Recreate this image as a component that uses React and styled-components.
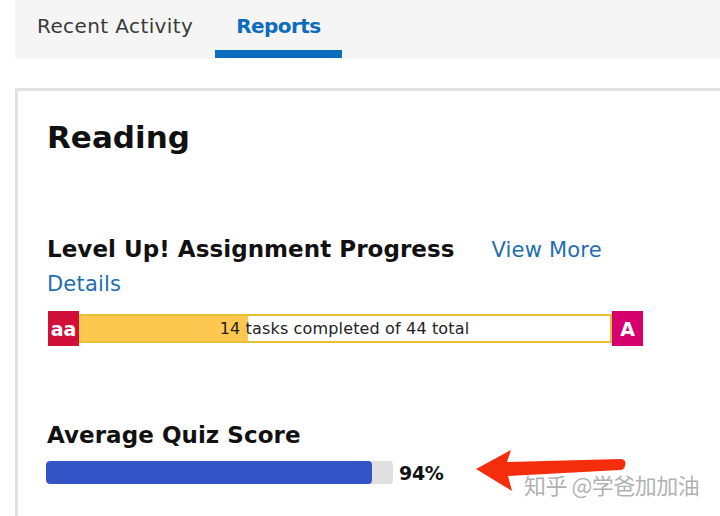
import React from "react";
import styled, { createGlobalStyle } from "styled-components";

const GlobalStyle = createGlobalStyle`
  html, body {
    margin: 0;
    padding: 0;
    background: #fff;
    overflow: hidden;
  }
  body {
    font-family: "DejaVu Sans", "Open Sans", sans-serif;
    color: #111;
  }
`;

const Page = styled.div`
  position: relative;
  width: 720px;
  height: 516px;
  padding-left: 15px;
  box-sizing: border-box;
  overflow: hidden;
`;

const TabBar = styled.div`
  display: flex;
  height: 59px;
  background: #f5f5f5;
`;

const Tab = styled.div`
  position: relative;
  padding: 12px 22px 0 ${(p) => (p.active ? "21px" : "22px")};
  height: 100%;
  box-sizing: border-box;
  font-size: 20px;
  line-height: 28px;
  letter-spacing: ${(p) => (p.active ? "-0.6px" : "0.4px")};
  font-weight: ${(p) => (p.active ? 700 : 400)};
  color: ${(p) => (p.active ? "#0b6cbd" : "#3a3a3a")};

  &::after {
    content: "";
    display: ${(p) => (p.active ? "block" : "none")};
    position: absolute;
    left: 0;
    right: 0;
    top: 50px;
    height: 8px;
    background: #0b6cbd;
  }
`;

const Card = styled.section`
  margin-top: 29px;
  margin-right: -40px;
  border: 3px solid #e2e2e2;
  padding: 26px 0 0 29px;
  height: 500px;
`;

const Title = styled.h1`
  margin: 0;
  font-size: 31px;
  font-weight: 700;
  line-height: 40px;
`;

const HeaderRow = styled.div`
  margin-top: 76px;
  display: flex;
  flex-wrap: wrap;
  align-items: baseline;
  width: 580px;
  column-gap: 37px;
`;

const SectionTitle = styled.h2`
  margin: 0;
  font-size: 23px;
  font-weight: 700;
  letter-spacing: 0.05px;
  line-height: 30px;
`;

const LinkText = styled.a`
  color: #1e6eb0;
  font-size: 21px;
  letter-spacing: 0.2px;
  line-height: 34px;
  text-decoration: none;
`;

const TaskBar = styled.div`
  display: flex;
  align-items: center;
  width: 595px;
  margin-top: 10px;
  margin-left: 1px;
`;

const Badge = styled.div`
  width: 31px;
  height: 35px;
  background: ${(p) => p.color};
  color: #fff;
  font-weight: 700;
  font-size: 19px;
  display: flex;
  align-items: center;
  justify-content: center;
  flex-shrink: 0;
`;

const Track = styled.div`
  position: relative;
  flex: 1;
  height: 29px;
  box-sizing: border-box;
  border: 2px solid #e6c032;
  border-left: none;
  background: #fff;
  display: flex;
  align-items: center;
  justify-content: center;
  font-size: 16px;
  letter-spacing: 0.15px;
  color: #222;
`;

const Fill = styled.div`
  position: absolute;
  left: 0;
  top: 0;
  bottom: 0;
  background: #fcc84f;
`;

const TrackLabel = styled.span`
  position: relative;
`;

const QuizSection = styled.div`
  margin-top: 74px;
`;

const QuizRow = styled.div`
  display: flex;
  align-items: center;
  gap: 6px;
  margin-top: 11px;
  margin-left: -1px;
`;

const QuizTrack = styled.div`
  width: 347px;
  height: 23px;
  border-radius: 4px;
  background: #e0e0e0;
  overflow: hidden;
`;

const QuizFill = styled.div`
  height: 100%;
  background: #3353c6;
  border-radius: 4px;
`;

const Percent = styled.span`
  font-size: 19px;
  font-weight: 700;
  letter-spacing: -0.3px;
`;

const Arrow = styled.svg`
  position: absolute;
  left: 474px;
  top: 448px;
`;

const Watermark = styled.div`
  position: absolute;
  left: 524px;
  top: 468px;
  font-family: "Noto Sans CJK SC", sans-serif;
  font-size: 22px;
  color: rgba(150, 150, 150, 0.75);
  text-shadow: 0 0 1px rgba(255, 255, 255, 0.9);
  letter-spacing: -0.5px;
`;

export default function App() {
  return (
    <>
      <GlobalStyle />
      <Page>
        <TabBar>
          <Tab>Recent Activity</Tab>
          <Tab active>Reports</Tab>
        </TabBar>
        <Card>
          <Title>Reading</Title>
          <HeaderRow>
            <SectionTitle>Level Up! Assignment Progress</SectionTitle>
            <LinkText href="#">View More</LinkText>
            <LinkText href="#">Details</LinkText>
          </HeaderRow>
          <TaskBar>
            <Badge color="#d1103a">aa</Badge>
            <Track>
              <Fill style={{ width: `${(14 / 44) * 100}%` }} />
              <TrackLabel>14 tasks completed of 44 total</TrackLabel>
            </Track>
            <Badge color="#d5006e">A</Badge>
          </TaskBar>
          <QuizSection>
            <SectionTitle>Average Quiz Score</SectionTitle>
            <QuizRow>
              <QuizTrack>
                <QuizFill style={{ width: "94%" }} />
              </QuizTrack>
              <Percent>94%</Percent>
            </QuizRow>
          </QuizSection>
        </Card>
        <Arrow width="156" height="46" viewBox="0 0 156 46">
          <path
            d="M2 21 L37 2 L33 14 L147 11 Q153 12 151 18 Q150 22 146 22 L34 28 L38 43 Z"
            fill="#f42d0c"
          />
        </Arrow>
        <Watermark>知乎 @学爸加加油</Watermark>
      </Page>
    </>
  );
}
